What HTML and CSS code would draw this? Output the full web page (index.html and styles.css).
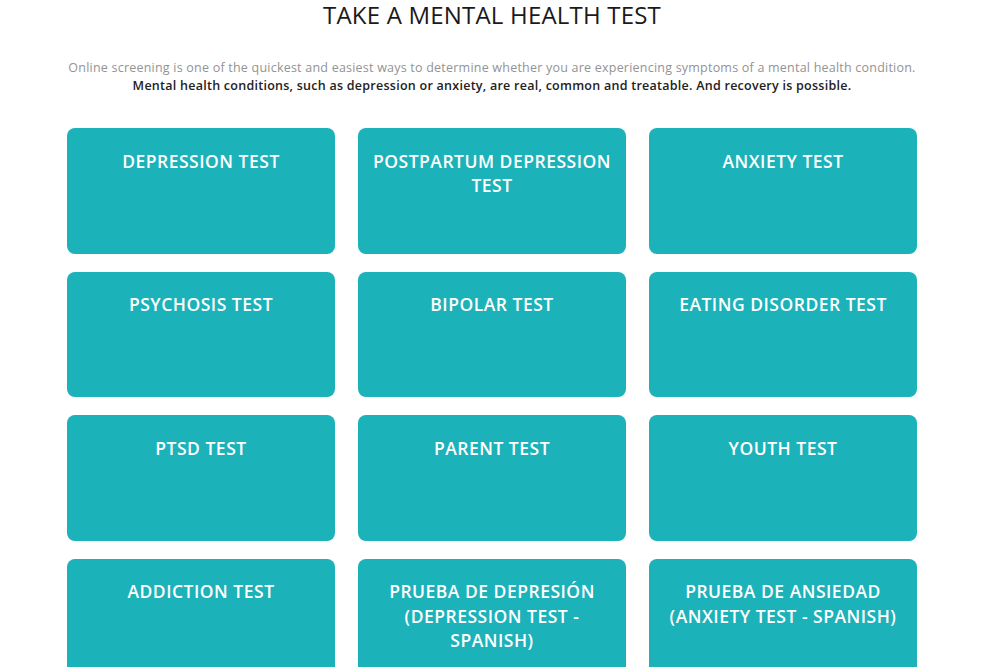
FILE: index.html
```html
<!DOCTYPE html>
<html lang="en">
<head>
<meta charset="utf-8">
<title>Take a Mental Health Test</title>
<link rel="stylesheet" href="styles.css">
</head>
<body>
<main class="page">
  <h1 class="title">TAKE A MENTAL HEALTH TEST</h1>
  <p class="intro">
    <span class="intro-light">Online screening is one of the quickest and easiest ways to determine whether you are experiencing symptoms of a mental health condition.</span>
    <span class="intro-bold">Mental health conditions, such as depression or anxiety, are real, common and treatable. And recovery is possible.</span>
  </p>
  <div class="grid">
    <a class="card" href="#">DEPRESSION TEST</a>
    <a class="card" href="#">POSTPARTUM DEPRESSION TEST</a>
    <a class="card" href="#">ANXIETY TEST</a>
    <a class="card" href="#">PSYCHOSIS TEST</a>
    <a class="card" href="#">BIPOLAR TEST</a>
    <a class="card" href="#">EATING DISORDER TEST</a>
    <a class="card" href="#">PTSD TEST</a>
    <a class="card" href="#">PARENT TEST</a>
    <a class="card" href="#">YOUTH TEST</a>
    <a class="card" href="#">ADDICTION TEST</a>
    <a class="card" href="#">PRUEBA DE DEPRESIÓN (DEPRESSION TEST - SPANISH)</a>
    <a class="card" href="#">PRUEBA DE ANSIEDAD (ANXIETY TEST - SPANISH)</a>
  </div>
</main>
</body>
</html>
```
FILE: styles.css
```css
html, body {
  margin: 0;
  padding: 0;
  background: #ffffff;
}
body {
  font-family: "Open Sans", "Noto Sans", "Liberation Sans", sans-serif;
  color: #222;
}
.page {
  width: 850px;
  margin-left: 67px;
}
.title {
  margin: 0;
  padding-top: 0;
  font-size: 24px;
  line-height: 30px;
  font-weight: 400;
  text-align: center;
  color: #1a1a1a;
  letter-spacing: 0.2px;
}
.intro {
  margin: 29px 0 0 0;
  text-align: center;
  font-size: 12.5px;
  line-height: 18px;
}
.intro-light {
  display: block;
  color: #939393;
  font-weight: 400;
  letter-spacing: 0.22px;
}
.intro-bold {
  display: block;
  color: #222;
  font-weight: 600;
  letter-spacing: 0.26px;
}
.grid {
  margin-top: 33px;
  display: grid;
  grid-template-columns: repeat(3, 268px);
  column-gap: 23px;
  row-gap: 18px;
  grid-auto-rows: 125.6px;
}
.card {
  display: block;
  box-sizing: border-box;
  background: #1cb2b9;
  border-radius: 8px;
  padding: 20.5px 10px 0;
  color: #ffffff;
  text-decoration: none;
  text-align: center;
  font-size: 17.5px;
  line-height: 24.5px;
  font-weight: 600;
  letter-spacing: 0.5px;
}
```
